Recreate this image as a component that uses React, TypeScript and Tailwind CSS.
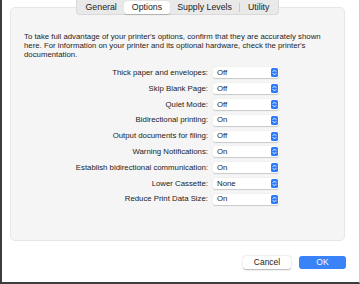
import React from "react";

const tabs = ["General", "Options", "Supply Levels", "Utility"];

const rows: [string, string][] = [
  ["Thick paper and envelopes:", "Off"],
  ["Skip Blank Page:", "Off"],
  ["Quiet Mode:", "Off"],
  ["Bidirectional printing:", "On"],
  ["Output documents for filing:", "Off"],
  ["Warning Notifications:", "On"],
  ["Establish bidirectional communication:", "On"],
  ["Lower Cassette:", "None"],
  ["Reduce Print Data Size:", "On"],
];

function Stepper() {
  return (
    <svg width="7" height="9" viewBox="0 0 7 9" className="shrink-0">
      <rect x="0" y="0" width="7" height="9" rx="1.6" fill="#2f7bf5" />
      <path d="M2 3.6 L3.5 2.1 L5 3.6" stroke="#fff" strokeWidth="0.9" fill="none" strokeLinecap="round" strokeLinejoin="round" />
      <path d="M2 5.4 L3.5 6.9 L5 5.4" stroke="#fff" strokeWidth="0.9" fill="none" strokeLinecap="round" strokeLinejoin="round" />
    </svg>
  );
}

export default function App() {
  return (
    <div
      className="w-[360px] h-[284px] bg-white border-l-2 border-b-2 border-[#3d3d3d] border-r border-r-[#cfcfcf] flex flex-col text-[#222] overflow-hidden"
      style={{ fontFamily: '"Liberation Sans", Arial, sans-serif' }}
    >
      {/* tabs */}
      <div className="flex justify-center relative z-10 -mb-[8px] pr-[6px]">
        <div className="flex items-center h-[15px] bg-[#e9e9e9] border border-t-0 border-[#d9d9d9] rounded-b-[4px] px-[1px] text-[8.8px] leading-none">
          {tabs.map((t, i) => (
            <React.Fragment key={t}>
              {i === 3 && <div className="w-px h-[9px] bg-[#c8c8c8]" />}
              <div
                className={
                  t === "Options"
                    ? "h-[13px] px-[7.5px] flex items-center bg-white rounded-[3px] shadow-[0_0.5px_1px_rgba(0,0,0,0.2)]"
                    : "h-[13px] px-[7.5px] flex items-center"
                }
              >
                {t}
              </div>
            </React.Fragment>
          ))}
        </div>
      </div>

      {/* panel */}
      <div className="ml-[8px] w-[335px] h-[234px] bg-[#f5f5f5] border border-[#e7e7e7] rounded-[5px] pt-[24px] pl-[13px] pr-[10px]">
        <p className="text-[7.8px] leading-[9px] text-[#1e1e1e]">
          To take full advantage of your printer's options, confirm that they are accurately shown
          here. For information on your printer and its optional hardware, check the printer's
          documentation.
        </p>
        <div className="mt-[6px] flex flex-col">
          {rows.map(([label, value]) => (
            <div key={label} className="h-[15.8px] flex items-center">
              <div className="w-[184px] text-right text-[7.8px] leading-none whitespace-nowrap">{label}</div>
              <div className="ml-[5px] w-[66px] h-[11px] bg-white rounded-[2.5px] shadow-[0_0.5px_1px_rgba(0,0,0,0.18)] flex items-center justify-between pl-[4px] pr-[1px]">
                <span className="text-[7.8px] leading-none">{value}</span>
                <Stepper />
              </div>
            </div>
          ))}
        </div>
      </div>

      {/* buttons */}
      <div className="flex justify-end gap-[8px] mt-[15px] pr-[13px]">
        <button className="w-[48px] h-[13px] bg-white rounded-[3px] shadow-[0_0.5px_1.5px_rgba(0,0,0,0.3)] text-[8.5px] leading-none text-[#222]">
          Cancel
        </button>
        <button className="w-[47px] h-[13px] bg-[#3a82f7] rounded-[3px] text-[8.5px] leading-none text-white">
          OK
        </button>
      </div>
    </div>
  );
}
